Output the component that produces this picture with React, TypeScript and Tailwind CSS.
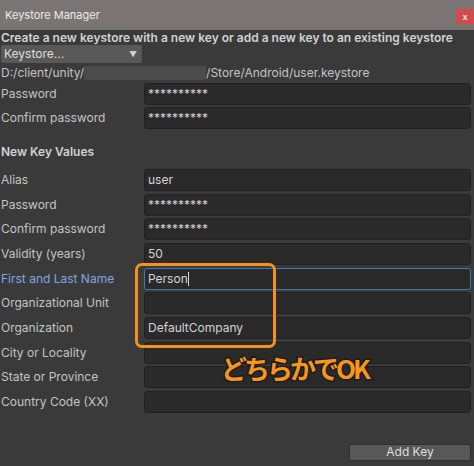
import React from 'react';

type Row = {
    label: string;
    value?: string;
    active?: boolean;
    cursor?: boolean;
};

const topRows: Row[] = [
    { label: 'Password', value: '**********' },
    { label: 'Confirm password', value: '**********' },
];

const keyRows: Row[] = [
    { label: 'Alias', value: 'user' },
    { label: 'Password', value: '**********' },
    { label: 'Confirm password', value: '**********' },
    { label: 'Validity (years)', value: '50' },
    { label: 'First and Last Name', value: 'Person', active: true, cursor: true },
    { label: 'Organizational Unit', value: '' },
    { label: 'Organization', value: 'DefaultCompany' },
    { label: 'City or Locality', value: '' },
    { label: 'State or Province', value: '' },
    { label: 'Country Code (XX)', value: '' },
];

function FieldRow({ row }: { row: Row }) {
    return (
        <div className="flex items-center h-[22px]">
            <div className={`w-[143px] shrink-0 text-[12px] ${row.active ? 'text-[#7ea6e0]' : 'text-[#c4c4c4]'}`}>
                {row.label}
            </div>
            <div
                className={`flex-1 h-full flex items-center px-[3px] rounded-[3px] border text-[12px] text-[#d4d4d4] bg-[#2a2a2a] ${
                    row.active ? 'border-[#3f78b5]' : 'border-[#212121]'
                }`}
            >
                <span>{row.value}</span>
                {row.cursor && <span className="w-px h-[14px] bg-[#d4d4d4]" />}
            </div>
        </div>
    );
}

export default function App() {
    return (
        <div className="relative w-[474px] h-[466px] overflow-hidden bg-[#3a3a3a] font-['Inter',sans-serif]">
            {/* Title bar */}
            <div className="h-[30px] flex justify-between bg-[#7a7574] pl-[5px]">
                <span className="self-center text-[11px] text-[#ececec]">Keystore Manager</span>
                <div className="mt-[9px] w-[18px] h-[15px] bg-[#cf4d4d] flex items-center justify-center text-[9px] font-bold leading-none text-[#f3dede]">
                    x
                </div>
            </div>

            <div className="pl-[1px] pr-[3px]">
                <div className="h-[15px] flex items-center text-[12px] font-semibold text-[#d2d2d2] whitespace-nowrap">
                    Create a new keystore with a new key or add a new key to an existing keystore
                </div>

                {/* Keystore dropdown */}
                <div className="h-[18px] w-[141px] flex items-center justify-between px-[3px] bg-[#585858] rounded-[2px] text-[12px] text-[#dedede]">
                    <span>Keystore...</span>
                    <span className="text-[8px] text-[#d0d0d0] pr-[2px]">▼</span>
                </div>

                {/* Path */}
                <div className="h-[20px] flex items-center text-[12px] text-[#c4c4c4] whitespace-nowrap">
                    <span>D:/client/unity/</span>
                    <span className="w-[122px] h-[14px] bg-[#4b4b4b]" />
                    <span>/Store/Android/user.keystore</span>
                </div>

                <div className="flex flex-col gap-[2px]">
                    {topRows.map((r, i) => (
                        <FieldRow key={i} row={r} />
                    ))}
                </div>

                <div className="mt-[14px] h-[18px] flex items-center text-[12px] font-semibold text-[#d2d2d2]">
                    New Key Values
                </div>

                <div className="mt-[8px] flex flex-col gap-[2.67px]">
                    {keyRows.map((r, i) => (
                        <FieldRow key={i} row={r} />
                    ))}
                </div>

                <div className="mt-[31px] flex justify-end">
                    <div className="w-[122px] h-[17px] flex items-center justify-center bg-[#585858] border border-[#2e2e2e] rounded-[2px] text-[12px] text-[#dedede]">
                        Add Key
                    </div>
                </div>
            </div>

            {/* Annotation overlay */}
            <div className="absolute left-[135px] top-[263px] w-[141px] h-[85px] border-[3px] border-[#f5921e] rounded-[7px]" />
            <div className="absolute left-[221px] top-[351px] text-[26px] font-bold leading-[34px] tracking-[-3px] text-[#f8951d] [-webkit-text-stroke:3px_#1c1c1c] [paint-order:stroke_fill] font-['Noto_Sans_CJK_JP',sans-serif] whitespace-nowrap">
                どちらかでOK
            </div>
        </div>
    );
}
